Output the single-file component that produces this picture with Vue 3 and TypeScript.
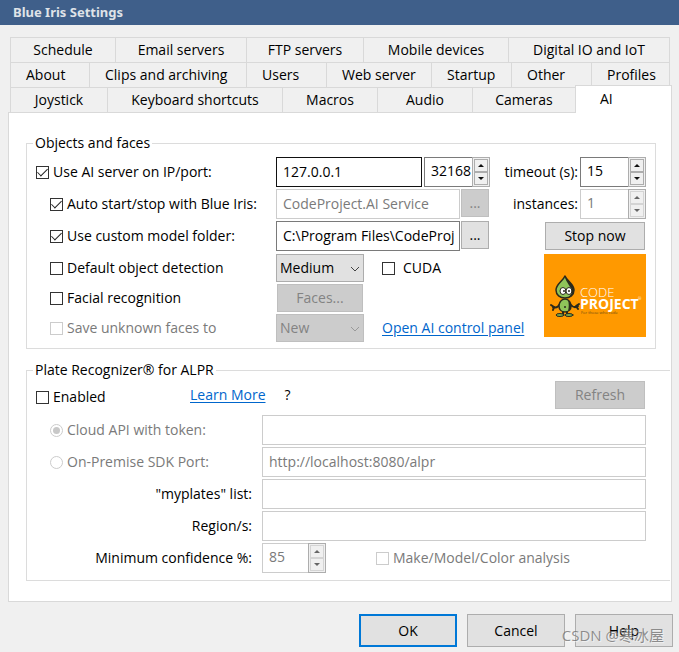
<script setup lang="ts">
import { ref } from 'vue'

interface Tab {
  label: string
}

const tabRows: { name: string; tabs: Tab[] }[] = [
  {
    name: 'row-top',
    tabs: [
      { label: 'Schedule' },
      { label: 'Email servers' },
      { label: 'FTP servers' },
      { label: 'Mobile devices' },
      { label: 'Digital IO and IoT' },
    ],
  },
  {
    name: 'row-middle',
    tabs: [
      { label: 'About' },
      { label: 'Clips and archiving' },
      { label: 'Users' },
      { label: 'Web server' },
      { label: 'Startup' },
      { label: 'Other' },
      { label: 'Profiles' },
    ],
  },
  {
    name: 'row-bottom',
    tabs: [
      { label: 'Joystick' },
      { label: 'Keyboard shortcuts' },
      { label: 'Macros' },
      { label: 'Audio' },
      { label: 'Cameras' },
      { label: 'AI' },
    ],
  },
]

const activeTab = ref('AI')
const useServer = ref(true)
const autoStart = ref(true)
const customFolder = ref(true)
const detectObjects = ref(false)
const detectFaces = ref(false)
const cuda = ref(false)
const address = ref('127.0.0.1')
const port = ref('32168')
const timeout = ref('15')
const instances = ref('1')
const service = ref('CodeProject.AI Service')
const folder = ref('C:\\Program Files\\CodeProject\\AI')
const modelSize = ref('Medium')
const alprEnabled = ref(false)
const endpoint = ref('http://localhost:8080/alpr')
const token = ref('')
const plates = ref('')
const region = ref('')
const confidence = ref('85')

function step(value: string, delta: number): string {
  return String(Math.max(0, Number(value) + delta))
}
</script>

<template>
  <main class="window">
    <header class="title-bar">Blue Iris Settings</header>

    <div class="content">
      <nav class="tabs" role="tablist">
        <div v-for="row in tabRows" :key="row.name" class="tab-row" :class="row.name">
          <button
            v-for="tab in row.tabs"
            :key="tab.label"
            type="button"
            role="tab"
            class="tab"
            :class="{ active: tab.label === activeTab }"
            :aria-selected="tab.label === activeTab"
            @click="activeTab = tab.label"
          >{{ tab.label }}</button>
        </div>
      </nav>

      <section class="panel">
        <fieldset class="group objects">
          <legend>Objects and faces</legend>

          <div class="line">
            <label class="check caption"><input v-model="useServer" type="checkbox" />Use AI server on IP/port:</label>
            <div class="fields">
              <input v-model="address" class="box dark" type="text" aria-label="Server address" />
              <span class="spinner">
                <input v-model="port" type="text" aria-label="Server port" />
                <span class="arrows">
                  <button type="button" aria-label="Increase port" @click="port = step(port, 1)"><i class="up"></i></button>
                  <button type="button" aria-label="Decrease port" @click="port = step(port, -1)"><i class="down"></i></button>
                </span>
              </span>
            </div>
            <div class="side">
              <label for="timeout">timeout (s):</label>
              <span class="spinner">
                <input id="timeout" v-model="timeout" type="text" />
                <span class="arrows">
                  <button type="button" aria-label="Increase timeout" @click="timeout = step(timeout, 1)"><i class="up"></i></button>
                  <button type="button" aria-label="Decrease timeout" @click="timeout = step(timeout, -1)"><i class="down"></i></button>
                </span>
              </span>
            </div>
          </div>

          <div class="line">
            <label class="check caption indent"><input v-model="autoStart" type="checkbox" />Auto start/stop with Blue Iris:</label>
            <div class="fields tight">
              <input v-model="service" class="box" type="text" aria-label="Service name" disabled />
              <button class="btn dots" type="button" disabled aria-label="Choose service">...</button>
            </div>
            <div class="side">
              <label for="instances">instances:</label>
              <span class="spinner off">
                <input id="instances" v-model="instances" type="text" disabled />
                <span class="arrows">
                  <button type="button" disabled aria-label="Increase instances"><i class="up"></i></button>
                  <button type="button" disabled aria-label="Decrease instances"><i class="down"></i></button>
                </span>
              </span>
            </div>
          </div>

          <div class="line">
            <label class="check caption indent"><input v-model="customFolder" type="checkbox" />Use custom model folder:</label>
            <div class="fields tight">
              <input v-model="folder" class="box" type="text" aria-label="Model folder" />
              <button class="btn dots" type="button" aria-label="Browse for folder">...</button>
            </div>
            <div class="side">
              <button class="btn stop" type="button">Stop now</button>
            </div>
          </div>

          <div class="lower">
            <div class="choices">
              <div class="choice">
                <label class="check caption indent"><input v-model="detectObjects" type="checkbox" />Default object detection</label>
                <span class="select">
                  <select v-model="modelSize" aria-label="Model size">
                    <option>Small</option>
                    <option>Medium</option>
                    <option>High</option>
                  </select>
                  <svg viewBox="0 0 10 6" aria-hidden="true"><path d="M1 1l4 4 4-4" /></svg>
                </span>
                <label class="check cuda"><input v-model="cuda" type="checkbox" />CUDA</label>
              </div>
              <div class="choice">
                <label class="check caption indent"><input v-model="detectFaces" type="checkbox" />Facial recognition</label>
                <button class="btn faces" type="button" disabled>Faces...</button>
              </div>
              <div class="choice">
                <label class="check caption indent off"><input type="checkbox" disabled />Save unknown faces to</label>
                <span class="select off">
                  <select aria-label="Folder for unknown faces" disabled>
                    <option>New</option>
                  </select>
                  <svg viewBox="0 0 10 6" aria-hidden="true"><path d="M1 1l4 4 4-4" /></svg>
                </span>
                <a class="panel-link" href="#control-panel">Open AI control panel</a>
              </div>
            </div>

            <svg class="logo" viewBox="0 0 102 83" role="img" aria-label="Code Project">
              <rect width="102" height="83" fill="#ff9900" />
              <g stroke-linecap="round" stroke-linejoin="round">
                <path d="M16 50q-3 5-7 3M26 50q4 5 8 2" fill="none" stroke="#2b2a1c" stroke-width="2" />
                <path d="M7 51l3 2-1 3M35 50l-3 2 2 3" fill="none" stroke="#2b2a1c" stroke-width="2" />
                <path d="M19 58v3M23 58v3" stroke="#2b2a1c" stroke-width="2" />
                <ellipse cx="16" cy="61" rx="4" ry="1.5" fill="#79a94b" stroke="#2b2a1c" />
                <ellipse cx="25" cy="61" rx="4" ry="1.5" fill="#79a94b" stroke="#2b2a1c" />
                <path d="M21 45c-4 0-6 4-6 7s2 6 6 6 6-3 6-6-2-7-6-7z" fill="#8fc45a" stroke="#2b2a1c" stroke-width="1.5" />
                <path d="M24 46c2 2 3 4 3 6s-1 4-3 5c1-4 1-7 0-11z" fill="#2b2a1c" />
                <circle cx="21" cy="53" r="1" fill="#2b2a1c" />
                <path d="M21 22c-2 5-9 8-9 14 0 5 4 8 9 8s9-3 9-8c0-6-7-9-9-14z" fill="#8fc45a" stroke="#2b2a1c" stroke-width="1.5" />
                <path d="M21 22c0 4 3 7 5 11 2 4 1 8-1 10 3-1 5-4 5-7 0-6-7-9-9-14z" fill="#2b2a1c" />
                <ellipse cx="19" cy="37" rx="3" ry="3.5" fill="#fff" stroke="#2b2a1c" />
                <ellipse cx="25" cy="37" rx="3" ry="3.5" fill="#fff" stroke="#2b2a1c" />
                <circle cx="20" cy="37" r="1" fill="#2b2a1c" />
                <circle cx="25" cy="37" r="1" fill="#2b2a1c" />
              </g>
              <text class="logo-code" x="36" y="43">CODE</text>
              <text class="logo-project" x="36" y="55">PROJECT</text>
              <text class="logo-mark" x="94" y="46">®</text>
              <text class="logo-motto" x="37" y="60">For those who code</text>
            </svg>
          </div>
        </fieldset>

        <fieldset class="group plates">
          <legend>Plate Recognizer® for ALPR</legend>
          <div class="enable">
            <label class="check"><input v-model="alprEnabled" type="checkbox" />Enabled</label>
            <a href="#learn-more">Learn More</a>
            <span class="hint">?</span>
            <button class="btn refresh" type="button" disabled>Refresh</button>
          </div>
          <div class="form">
            <label class="check indent off"><input type="radio" name="alpr-mode" checked disabled />Cloud API with token:</label>
            <input v-model="token" class="box" type="text" aria-label="API token" disabled />

            <label class="check indent off"><input type="radio" name="alpr-mode" disabled />On-Premise SDK Port:</label>
            <input v-model="endpoint" class="box" type="text" aria-label="SDK address" disabled />

            <label class="end" for="plates">"myplates" list:</label>
            <input id="plates" v-model="plates" class="box" type="text" disabled />

            <label class="end" for="region">Region/s:</label>
            <input id="region" v-model="region" class="box" type="text" disabled />

            <label class="end" for="confidence">Minimum confidence %:</label>
            <div class="confidence">
              <span class="spinner off">
                <input id="confidence" v-model="confidence" type="text" disabled />
                <span class="arrows">
                  <button type="button" disabled aria-label="Increase confidence"><i class="up"></i></button>
                  <button type="button" disabled aria-label="Decrease confidence"><i class="down"></i></button>
                </span>
              </span>
              <label class="check off"><input type="checkbox" disabled />Make/Model/Color analysis</label>
            </div>
          </div>
        </fieldset>
      </section>
    </div>

    <footer class="actions">
      <button class="btn primary" type="button">OK</button>
      <button class="btn" type="button">Cancel</button>
      <button class="btn" type="button">Help</button>
      <span class="watermark">CSDN @寒冰屋</span>
    </footer>
  </main>
</template>

<style>
body {
  background: #f0f0f0;
}
</style>

<style scoped>
* {
  box-sizing: border-box;
}

.window {
  background: #f0f0f0;
  color: #000;
  font: 14px/20px "Open Sans", "Noto Sans", sans-serif;
  white-space: nowrap;
}

button,
input,
select {
  font: inherit;
  color: inherit;
  margin: 0;
  border-radius: 0;
}

.title-bar {
  height: 25px;
  padding-left: 13px;
  background: #3f5f8a;
  color: #dfe3e8;
  font: bold 13px/25px "Noto Sans", sans-serif;
}

.content {
  padding: 12px 7px 0 8px;
}

/* Tabs */
.tabs {
  margin: 0 2px;
}

.tab-row {
  display: grid;
  height: 25px;
  border-left: 1px solid #d9d9d9;
}

.row-top {
  grid-template-columns: 105fr 131fr 117fr 145fr 161fr;
}

.row-middle {
  grid-template-columns: 79fr 157fr 80fr 105fr 80fr 80fr 78fr;
}

.row-bottom {
  grid-template-columns: 97fr 175fr 95fr 95fr 103fr 94fr;
}

.tab {
  min-width: 0;
  padding: 0;
  border: 0;
  border-top: 1px solid #d9d9d9;
  border-right: 1px solid #d9d9d9;
  background: #f0f0f0;
  text-align: center;
}

.row-middle .tab {
  padding-left: 15px;
  text-align: left;
}

.tab.active {
  position: relative;
  margin: -2px -2px -1px -1px;
  padding: 0 0 2px 24px;
  border: 1px solid #d9d9d9;
  border-bottom: 0;
  background: #fff;
  text-align: left;
}

/* Panel and groups */
.panel {
  padding: 20px 0 20px 17px;
  border: 1px solid #d9d9d9;
  background: #fff;
}

.group {
  min-width: 0;
  margin: 0;
  padding: 0 9px 6px;
  border: 1px solid #dcdcdc;
}

.group legend {
  height: 20px;
  margin-left: -3px;
  padding: 0 2px;
}

.objects {
  margin-right: 15px;
}

.plates {
  margin: 11px 1px 0 0;
  padding-right: 24px;
  padding-bottom: 7px;
  border-right: 0;
}

.line {
  display: flex;
  height: 30px;
  margin-bottom: 2px;
}

.objects .line:first-of-type {
  margin-top: 4px;
}

.caption {
  flex: none;
  width: 240px;
}

.check {
  display: flex;
  align-items: center;
  gap: 4px;
}

.indent {
  padding-left: 14px;
}

.off {
  color: #7a7a7a;
}

.fields {
  display: flex;
  flex: 1;
  min-width: 0;
  gap: 2px;
}

.fields.tight {
  gap: 1px;
  padding-right: 1px;
}

.side {
  display: flex;
  flex: none;
  justify-content: flex-end;
  align-items: center;
  gap: 2px;
  width: 156px;
}

/* Tick boxes and radios */
input[type="checkbox"],
input[type="radio"] {
  appearance: none;
  display: grid;
  flex: none;
  place-items: center;
  width: 13px;
  height: 13px;
  border: 1px solid #333;
  background: #fff;
}

input[type="checkbox"]:checked::before {
  content: "";
  width: 10px;
  height: 5px;
  margin-top: -3px;
  border-bottom: 1px solid #222;
  border-left: 1px solid #222;
  transform: rotate(-45deg) scale(0.9);
}

input[type="radio"] {
  border-radius: 50%;
}

input[type="radio"]:checked::before {
  content: "";
  width: 7px;
  height: 7px;
  border-radius: 50%;
  background: #c8c8c8;
}

input[type="checkbox"]:disabled,
input[type="radio"]:disabled {
  border-color: #ccc;
}

/* Text boxes */
.box {
  flex: 1;
  min-width: 0;
  width: 100%;
  height: 30px;
  padding: 0 5px 2px 6px;
  border: 1px solid #7a7a7a;
  background: #fff;
}

.box.dark {
  border-color: #111;
}

.box:disabled {
  border-color: #ccc;
  color: #7a7a7a;
}

.spinner {
  display: flex;
  flex: none;
  width: 66px;
  height: 30px;
  border: 1px solid #7a7a7a;
  background: #fff;
}

.spinner input {
  flex: 1;
  min-width: 0;
  width: 100%;
  padding: 0 0 2px 6px;
  border: 0;
  background: #fff;
}

.spinner.off {
  border-color: #ccc;
}

.arrows {
  display: grid;
  flex: none;
  grid-template-rows: 1fr 1fr;
  width: 18px;
  margin: -1px;
  padding: 1px;
  border: 1px solid #adadad;
  background: #f0f0f0;
}

.arrows button {
  display: grid;
  place-items: center;
  padding: 0;
  border: 1px solid #adadad;
  background: #f0f0f0;
}

.off .arrows button {
  border-color: #d4d4d4;
}

.up,
.down {
  border-right: 3px solid transparent;
  border-left: 3px solid transparent;
}

.up {
  border-bottom: 3px solid #111;
}

.down {
  border-top: 3px solid #111;
}

.off .up {
  border-bottom-color: #666;
}

.off .down {
  border-top-color: #666;
}

/* Buttons and drop-downs */
.btn {
  height: 28px;
  padding: 0;
  border: 1px solid #adadad;
  background: #e1e1e1;
  text-align: center;
}

.btn:disabled {
  border-color: #bfbfbf;
  background: #ccc;
  color: #838383;
}

.dots {
  flex: none;
  width: 28px;
}

.stop {
  width: 100px;
  margin-right: 1px;
}

.faces {
  width: 86px;
  margin-left: 1px;
}

.select {
  position: relative;
  flex: none;
  width: 88px;
  height: 28px;
}

.select select {
  appearance: none;
  width: 100%;
  height: 100%;
  padding: 0 0 0 3px;
  border: 1px solid #adadad;
  background: #e1e1e1;
}

.select svg {
  position: absolute;
  top: 12px;
  right: 4px;
  width: 10px;
  height: 6px;
  fill: none;
  stroke: #444;
  pointer-events: none;
}

.select.off select {
  border-color: #bfbfbf;
  background: #ccc;
  color: #838383;
  opacity: 1;
}

.select.off svg {
  stroke: #999;
}

.lower {
  display: flex;
  justify-content: space-between;
  margin-top: 3px;
}

.choices {
  display: flex;
  flex-direction: column;
  gap: 2px;
}

.choice {
  display: flex;
  height: 28px;
}

.cuda {
  gap: 8px;
  margin-left: 18px;
}

a {
  color: #0066cc;
  text-decoration: underline;
  text-underline-offset: 2px;
}

.panel-link {
  align-self: center;
  margin-left: 18px;
}

.logo {
  flex: none;
  width: 102px;
  height: 83px;
}

.logo text {
  font-family: "Open Sans", sans-serif;
  fill: #fff;
}

.logo .logo-code {
  font-size: 13px;
  font-weight: 300;
}

.logo .logo-project {
  font-size: 14px;
  font-weight: 700;
}

.logo .logo-mark {
  font-size: 4px;
}

.logo .logo-motto {
  font-size: 4px;
  fill: #6b4a12;
}

/* Plate recognition */
.enable {
  display: flex;
  align-items: center;
  height: 28px;
  margin-top: 1px;
}

.enable .check {
  width: 154px;
  padding-top: 4px;
}

.hint {
  margin-left: 19px;
}

.refresh {
  width: 90px;
  margin: 0 1px 0 auto;
}

.form {
  display: grid;
  grid-template-columns: 216px 1fr;
  gap: 2px 10px;
  align-items: center;
  margin-top: 6px;
}

.end {
  text-align: right;
}

.confidence {
  display: flex;
}

.confidence .spinner {
  width: 64px;
}

.confidence .check {
  margin-left: 50px;
}

/* Footer */
.actions {
  position: relative;
  display: flex;
  justify-content: flex-end;
  gap: 10px;
  padding: 12px 6px 5px;
}

.actions .btn {
  width: 98px;
  height: 33px;
}

.actions .primary {
  border: 2px solid #0078d7;
}

.watermark {
  position: absolute;
  right: 15px;
  bottom: 7px;
  color: rgba(110, 110, 110, 0.75);
  font-family: "Open Sans", "Noto Sans CJK SC", sans-serif;
  font-size: 15px;
  text-shadow: 1px 1px 1px rgba(255, 255, 255, 0.6);
  pointer-events: none;
}
</style>
